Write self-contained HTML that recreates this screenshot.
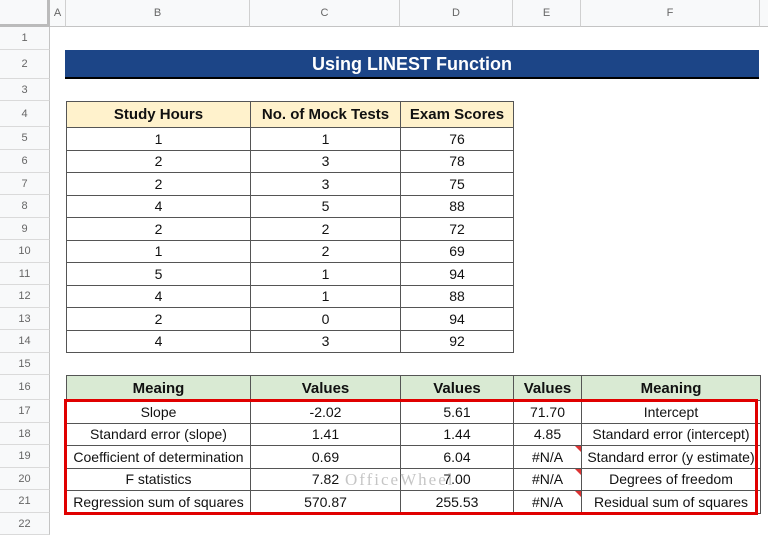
<!DOCTYPE html>
<html><head><meta charset="utf-8"><style>
*{margin:0;padding:0;box-sizing:border-box}
body{width:768px;height:521px;overflow:hidden;background:#fff;font-family:"Liberation Sans",Arial,sans-serif;position:relative}
.ch{position:absolute;top:0;height:27px;background:#f8f9fa;border-right:1px solid #d0d0d0;border-bottom:1px solid #c4c4c4;color:#666;font-size:11px;text-align:center;line-height:27px}
.rh{position:absolute;left:0;width:50px;background:#f8f9fa;border-right:1px solid #c4c4c4;border-bottom:1px solid #dadada;color:#666;font-size:11px;text-align:center}
table{position:absolute;border-collapse:collapse;table-layout:fixed}
td{border:1px solid #555;text-align:center;font-size:14px;color:#111;padding:0;white-space:nowrap;overflow:hidden;position:relative}
th{border:1px solid #555;text-align:center;font-size:15px;font-weight:bold;color:#111;padding:0}
.y th{background:#fff2cc}
.g th{background:#d9ead3}
.tri::after{content:"";position:absolute;top:0;right:0;border-top:6px solid #d33;border-left:6px solid transparent}
</style></head><body>
<div class="ch" style="left:0;width:50px;border-right:3px solid #bbb;border-bottom:3px solid #bbb"></div>
<div class="ch" style="left:50px;width:16px">A</div>
<div class="ch" style="left:66px;width:184px">B</div>
<div class="ch" style="left:250px;width:150px">C</div>
<div class="ch" style="left:400px;width:113px">D</div>
<div class="ch" style="left:513px;width:68px">E</div>
<div class="ch" style="left:581px;width:179px">F</div>
<div class="ch" style="left:760px;width:20px"></div>

<div class="rh" style="top:27px;height:23px;line-height:23px">1</div>
<div class="rh" style="top:50px;height:29px;line-height:29px">2</div>
<div class="rh" style="top:79px;height:22px;line-height:22px">3</div>
<div class="rh" style="top:101px;height:26px;line-height:26px">4</div>
<div class="rh" style="top:127px;height:23px;line-height:23px">5</div>
<div class="rh" style="top:150px;height:22.5px;line-height:22px">6</div>
<div class="rh" style="top:172.5px;height:22.5px;line-height:22px">7</div>
<div class="rh" style="top:195px;height:22.5px;line-height:22px">8</div>
<div class="rh" style="top:217.5px;height:22.5px;line-height:22px">9</div>
<div class="rh" style="top:240px;height:22.5px;line-height:22px">10</div>
<div class="rh" style="top:262.5px;height:22.5px;line-height:22px">11</div>
<div class="rh" style="top:285px;height:22.5px;line-height:22px">12</div>
<div class="rh" style="top:307.5px;height:22.5px;line-height:22px">13</div>
<div class="rh" style="top:330px;height:22.5px;line-height:22px">14</div>
<div class="rh" style="top:352.5px;height:22.5px;line-height:22px">15</div>
<div class="rh" style="top:375px;height:25px;line-height:25px">16</div>
<div class="rh" style="top:400px;height:22.5px;line-height:22px">17</div>
<div class="rh" style="top:422.5px;height:22.5px;line-height:22px">18</div>
<div class="rh" style="top:445px;height:22.5px;line-height:22px">19</div>
<div class="rh" style="top:467.5px;height:22.5px;line-height:22px">20</div>
<div class="rh" style="top:490px;height:22.5px;line-height:22px">21</div>
<div class="rh" style="top:512.5px;height:22.5px;line-height:22px">22</div>

<div style="position:absolute;left:65px;top:50px;width:694px;height:29px;background:#1c4587;border-bottom:2px solid #000;color:#fff;font-weight:bold;font-size:18px;text-align:center;line-height:28px">Using LINEST Function</div>

<table class="y" style="left:66px;top:101px;width:447px">
<colgroup><col style="width:184px"><col style="width:150px"><col style="width:113px"></colgroup>
<tr style="height:26px"><th>Study Hours</th><th>No. of Mock Tests</th><th>Exam Scores</th></tr>
<tr style="height:22.5px"><td>1</td><td>1</td><td>76</td></tr>
<tr style="height:22.5px"><td>2</td><td>3</td><td>78</td></tr>
<tr style="height:22.5px"><td>2</td><td>3</td><td>75</td></tr>
<tr style="height:22.5px"><td>4</td><td>5</td><td>88</td></tr>
<tr style="height:22.5px"><td>2</td><td>2</td><td>72</td></tr>
<tr style="height:22.5px"><td>1</td><td>2</td><td>69</td></tr>
<tr style="height:22.5px"><td>5</td><td>1</td><td>94</td></tr>
<tr style="height:22.5px"><td>4</td><td>1</td><td>88</td></tr>
<tr style="height:22.5px"><td>2</td><td>0</td><td>94</td></tr>
<tr style="height:22.5px"><td>4</td><td>3</td><td>92</td></tr>
</table>

<table class="g" style="left:66px;top:375px;width:694px">
<colgroup><col style="width:184px"><col style="width:150px"><col style="width:113px"><col style="width:68px"><col style="width:179px"></colgroup>
<tr style="height:25px"><th>Meaing</th><th>Values</th><th>Values</th><th>Values</th><th>Meaning</th></tr>
<tr style="height:22.5px"><td>Slope</td><td>-2.02</td><td>5.61</td><td>71.70</td><td>Intercept</td></tr>
<tr style="height:22.5px"><td>Standard error (slope)</td><td>1.41</td><td>1.44</td><td>4.85</td><td>Standard error (intercept)</td></tr>
<tr style="height:22.5px"><td>Coefficient of determination</td><td>0.69</td><td>6.04</td><td class="tri">#N/A</td><td>Standard error (y estimate)</td></tr>
<tr style="height:22.5px"><td>F statistics</td><td>7.82</td><td>7.00</td><td class="tri">#N/A</td><td>Degrees of freedom</td></tr>
<tr style="height:22.5px"><td>Regression sum of squares</td><td>570.87</td><td>255.53</td><td class="tri">#N/A</td><td>Residual sum of squares</td></tr>
</table>

<div style="position:absolute;left:345px;top:470px;font-family:'Liberation Serif',serif;font-size:17px;letter-spacing:2px;color:rgba(150,150,150,0.55)">OfficeWheel</div>
<div style="position:absolute;left:64px;top:399px;width:694px;height:116px;border:3px solid #e00000"></div>
</body></html>
